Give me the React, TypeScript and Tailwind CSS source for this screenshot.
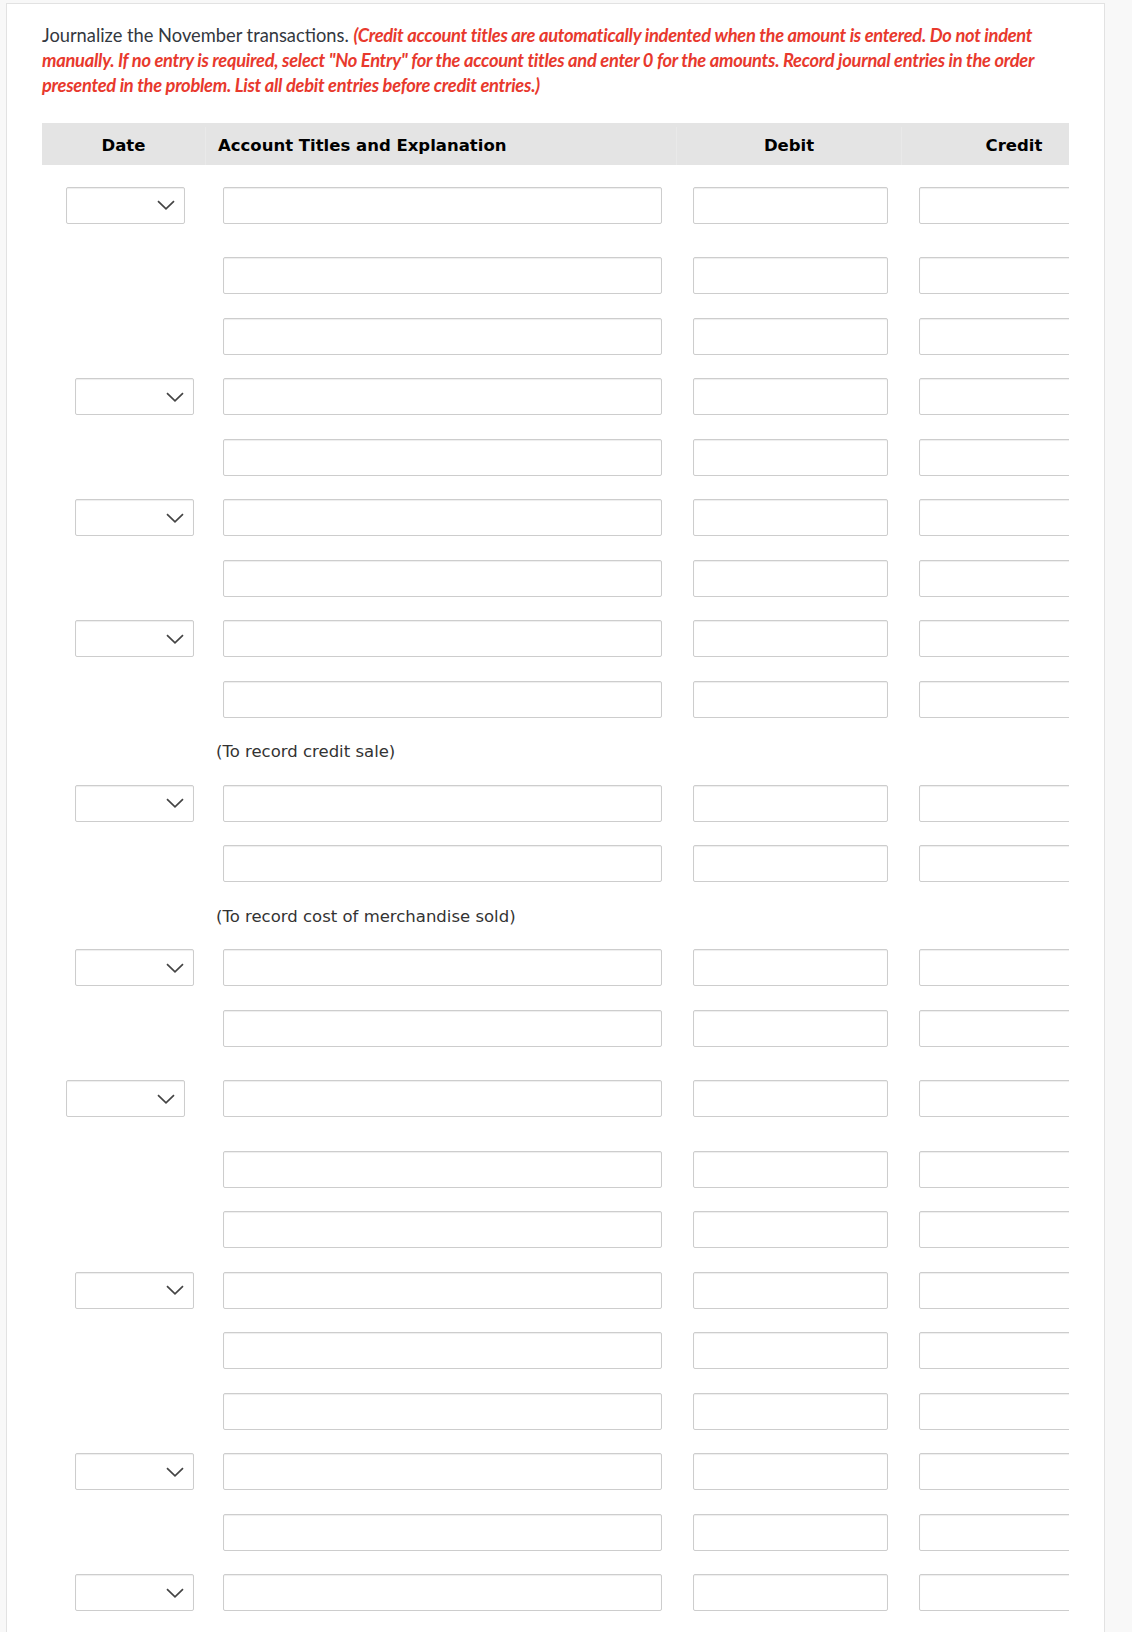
import React from 'react';

type Row =
  | { kind: 'entry'; date?: 'first' | 'normal' }
  | { kind: 'note'; text: string };

const rows: Row[] = [
  { kind: 'entry', date: 'first' },
  { kind: 'entry' },
  { kind: 'entry' },
  { kind: 'entry', date: 'normal' },
  { kind: 'entry' },
  { kind: 'entry', date: 'normal' },
  { kind: 'entry' },
  { kind: 'entry', date: 'normal' },
  { kind: 'entry' },
  { kind: 'note', text: '(To record credit sale)' },
  { kind: 'entry', date: 'normal' },
  { kind: 'entry' },
  { kind: 'note', text: '(To record cost of merchandise sold)' },
  { kind: 'entry', date: 'normal' },
  { kind: 'entry' },
  { kind: 'entry', date: 'first' },
  { kind: 'entry' },
  { kind: 'entry' },
  { kind: 'entry', date: 'normal' },
  { kind: 'entry' },
  { kind: 'entry' },
  { kind: 'entry', date: 'normal' },
  { kind: 'entry' },
  { kind: 'entry', date: 'normal' },
];

const boxClass =
  'h-[37px] bg-white border border-[#cdcdcd] rounded-[2px] shadow-[inset_0_1px_1px_rgba(0,0,0,0.07)]';

const DateSelect = ({ first }: { first: boolean }) => (
  <div className={`${boxClass} w-[119px] flex items-center justify-end pr-[9px] ${first ? 'ml-[24px]' : 'ml-[33px]'}`}>
    <svg width="18" height="10" viewBox="0 0 18 10" fill="none">
      <path d="M1 1.2 L9 8.8 L17 1.2" stroke="#444" strokeWidth="1.7" />
    </svg>
  </div>
);

const App: React.FC = () => {
  return (
    <div className="min-h-screen bg-[#f8f8f8] pl-[6px] pt-[3px]">
      <div className="w-[1099px] bg-white border border-[#e2e2e2] pl-[35px] pt-[19px] pb-[40px]">
        <p className="w-[1027px] text-[18.3px] leading-[25px] text-[#333840] font-['Lato',sans-serif]">
          Journalize the November transactions.{' '}
          <span className="italic font-bold tracking-[-0.27px] text-[#e8392d]">
            (Credit account titles are automatically indented when the amount is entered. Do not indent manually. If no entry is required, select "No Entry" for the account titles and enter 0 for the amounts. Record journal entries in the order presented in the problem. List all debit entries before credit entries.)
          </span>
        </p>

        <div className="mt-[25px] w-[1027px] overflow-hidden font-['DejaVu_Sans',sans-serif] text-[16.5px]">
          <div className="w-[1084px]">
            {/* header */}
            <div className="flex h-[42px] bg-[#e4e4e4] font-bold text-black pt-[4px]">
              <div className="w-[163px] flex items-center justify-center">Date</div>
              <div className="w-[471px] flex items-center pl-[12px] border-l border-[#e9e9e9]">Account Titles and Explanation</div>
              <div className="w-[225px] flex items-center justify-center border-l border-[#e9e9e9]">Debit</div>
              <div className="w-[225px] flex items-center justify-center border-l border-[#e9e9e9]">Credit</div>
            </div>

            {rows.map((row, i) =>
              row.kind === 'note' ? (
                <div key={i} className="flex h-[43.5px] items-center pt-[3px]">
                  <div className="w-[163px]" />
                  <div className="pl-[11px] text-[#333]">{row.text}</div>
                </div>
              ) : (
                <div
                  key={i}
                  className={`flex ${row.date === 'first' ? 'py-[21.75px]' : 'py-[11.75px]'}`}
                >
                  <div className="w-[163px]">{row.date && <DateSelect first={row.date === 'first'} />}</div>
                  <div className="w-[471px] pl-[18px]">
                    <div className={`${boxClass} w-[439px]`} />
                  </div>
                  <div className="w-[225px] pl-[17px]">
                    <div className={`${boxClass} w-[195px]`} />
                  </div>
                  <div className="w-[225px] pl-[18px]">
                    <div className={`${boxClass} w-[195px]`} />
                  </div>
                </div>
              )
            )}
          </div>
        </div>
      </div>
    </div>
  );
};

export default App;
